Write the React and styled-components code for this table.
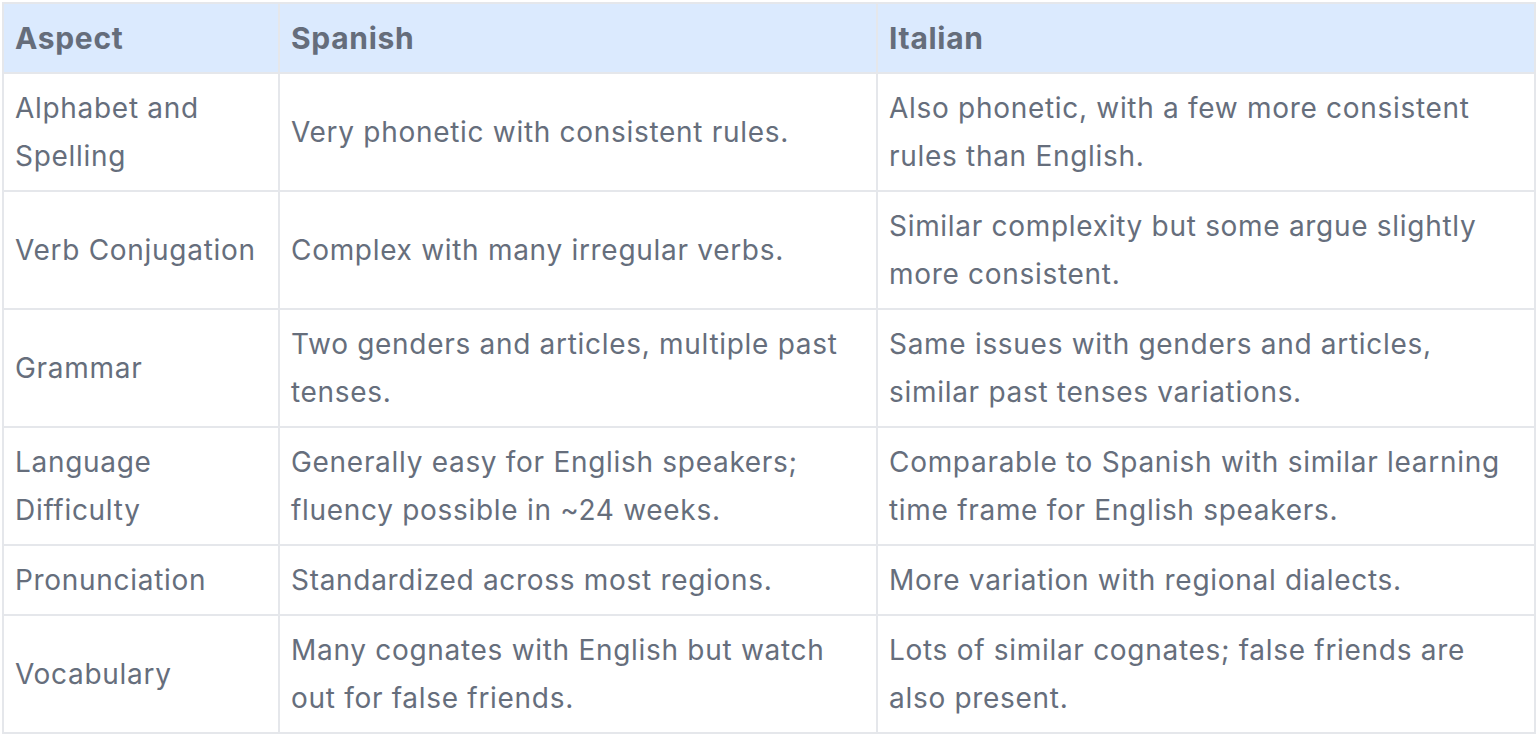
import React from "react";
import styled, { createGlobalStyle } from "styled-components";

const Global = createGlobalStyle`
  html, body { margin: 0; padding: 0; background: #ffffff; }
  body { font-family: Inter, "Open Sans", "Liberation Sans", sans-serif; }
`;

const Wrap = styled.div`
  padding: 2px 4px 2px 2px;
`;

const Table = styled.table`
  width: 1532px;
  border-collapse: collapse;
  table-layout: fixed;
  font-size: 28px;
  line-height: 48px;
  letter-spacing: 0.7px;
  color: #666e7c;
`;

const HeadCell = styled.th`
  background: #dbeafe;
  border: 2px solid #e5e7eb;
  padding: 10px 11px;
  text-align: left;
  font-size: 30px;
  font-weight: 700;
  letter-spacing: 0.7px;
  color: #656d7b;
  vertical-align: middle;
`;

const Cell = styled.td`
  border: 2px solid #e5e7eb;
  padding: 10px 11px;
  text-align: left;
  font-weight: 400;
  vertical-align: middle;
`;

const rows = [
  ["Alphabet and Spelling", "Very phonetic with consistent rules.", "Also phonetic, with a few more consistent rules than English."],
  ["Verb Conjugation", "Complex with many irregular verbs.", "Similar complexity but some argue slightly more consistent."],
  ["Grammar", "Two genders and articles, multiple past tenses.", "Same issues with genders and articles, similar past tenses variations."],
  ["Language Difficulty", "Generally easy for English speakers; fluency possible in ~24 weeks.", "Comparable to Spanish with similar learning time frame for English speakers."],
  ["Pronunciation", "Standardized across most regions.", "More variation with regional dialects."],
  ["Vocabulary", "Many cognates with English but watch out for false friends.", "Lots of similar cognates; false friends are also present."],
];

export default function App() {
  return (
    <>
      <Global />
      <Wrap>
        <Table>
          <colgroup>
            <col style={{ width: 276 }} />
            <col style={{ width: 598 }} />
            <col style={{ width: 658 }} />
          </colgroup>
          <thead>
            <tr>
              <HeadCell>Aspect</HeadCell>
              <HeadCell>Spanish</HeadCell>
              <HeadCell>Italian</HeadCell>
            </tr>
          </thead>
          <tbody>
            {rows.map((r) => (
              <tr key={r[0]}>
                {r.map((c, i) => (
                  <Cell key={i}>{c}</Cell>
                ))}
              </tr>
            ))}
          </tbody>
        </Table>
      </Wrap>
    </>
  );
}
